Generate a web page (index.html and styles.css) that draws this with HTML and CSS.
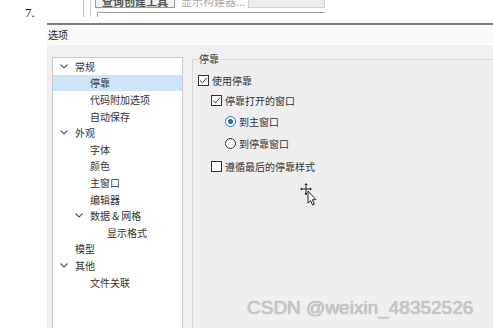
FILE: index.html
```html
<!doctype html>
<html lang="zh-CN">
<head>
	<meta charset="UTF-8">
	<title>选项</title>
	<link rel="stylesheet" href="styles.css">
</head>
<body>
	<div class="top">
		<span class="num">7.</span>
		<div class="frag">
			<div class="frag-in">
				<div class="tabs">
					<span class="tab tab-on">查询创建工具</span>
					<span class="tab tab-off">显示构建器...</span>
					<span class="tab tab-blank"></span>
				</div>
				<div class="edit"></div>
			</div>
		</div>
	</div>
	<div class="win">
		<div class="title">选项</div>
		<div class="main">
			<ul class="tree">
				<li class="node l0"><span class="tw"><svg width="8" height="5" viewBox="0 0 8 5"><path d="M0.5 0.5 L4 4 L7.5 0.5" fill="none" stroke="#555" stroke-width="1.1"/></svg></span>常规</li>
				<li class="node l1 on"><span class="tw"></span>停靠</li>
				<li class="node l1"><span class="tw"></span>代码附加选项</li>
				<li class="node l1"><span class="tw"></span>自动保存</li>
				<li class="node l0"><span class="tw"><svg width="8" height="5" viewBox="0 0 8 5"><path d="M0.5 0.5 L4 4 L7.5 0.5" fill="none" stroke="#555" stroke-width="1.1"/></svg></span>外观</li>
				<li class="node l1"><span class="tw"></span>字体</li>
				<li class="node l1"><span class="tw"></span>颜色</li>
				<li class="node l1"><span class="tw"></span>主窗口</li>
				<li class="node l1"><span class="tw"></span>编辑器</li>
				<li class="node l1"><span class="tw"><svg width="8" height="5" viewBox="0 0 8 5"><path d="M0.5 0.5 L4 4 L7.5 0.5" fill="none" stroke="#555" stroke-width="1.1"/></svg></span>数据 &amp; 网格</li>
				<li class="node l2"><span class="tw"></span>显示格式</li>
				<li class="node l0"><span class="tw"></span>模型</li>
				<li class="node l0"><span class="tw"><svg width="8" height="5" viewBox="0 0 8 5"><path d="M0.5 0.5 L4 4 L7.5 0.5" fill="none" stroke="#555" stroke-width="1.1"/></svg></span>其他</li>
				<li class="node l1"><span class="tw"></span>文件关联</li>
			</ul>
			<fieldset class="group">
				<legend>停靠</legend>
				<div class="opt r1">
					<span class="box"><svg width="9" height="9" viewBox="0 0 9 9"><path d="M1.2 4.6 L3.5 6.9 L7.8 1.8" fill="none" stroke="#333" stroke-width="1"/></svg></span>使用停靠
				</div>
				<div class="opt r2 in1">
					<span class="box"><svg width="9" height="9" viewBox="0 0 9 9"><path d="M1.2 4.6 L3.5 6.9 L7.8 1.8" fill="none" stroke="#333" stroke-width="1"/></svg></span>停靠打开的窗口
				</div>
				<div class="opt r3 in2">
					<span class="radio on"></span>到主窗口
				</div>
				<div class="opt r4 in2">
					<span class="radio"></span>到停靠窗口
				</div>
				<div class="opt r5 in1">
					<span class="box"></span>遵循最后的停靠样式
				</div>
			</fieldset>
		</div>
	</div>
	<svg class="cursor" width="20" height="24" viewBox="0 0 20 24">
		<path d="M6 1 L6 12 M1 6 L11 6" stroke="#222" stroke-width="1"/>
		<path d="M6 0 L4.5 2 L7.5 2 Z M6 12 L4.5 10 L7.5 10 Z M0 6 L2 4.5 L2 7.5 Z M12 6 L10 4.5 L10 7.5 Z" fill="#222"/>
		<path d="M8 8 L8 20 L10.6 17.5 L12.6 22 L14.4 21.2 L12.4 16.8 L16 16.6 Z" fill="#fff" stroke="#222" stroke-width="1"/>
	</svg>
	<div class="mark">CSDN @weixin_48352526</div>
</body>
</html>
```

FILE: styles.css
```css
*{
	margin: 0;
	padding: 0;
	box-sizing: border-box;
}
ul,li{
	list-style: none;
}
html{
	height: 328px;
	overflow: hidden;
}
body{
	width: 493px;
	height: 328px;
	overflow: hidden;
	display: flex;
	flex-direction: column;
	background: #fff;
	font-family: "Noto Sans CJK SC", "Liberation Sans", sans-serif;
	font-size: 10px;
	color: #333;
	position: relative;
}
.top{
	height: 23px;
	flex: none;
	display: flex;
}
.num{
	width: 83px;
	padding: 5px 0 0 25px;
	font-family: "Liberation Serif", serif;
	font-size: 13px;
	color: #222;
}
.frag{
	height: 17px;
	border-left: 1px solid #b8b8b8;
	padding-left: 6px;
}
.frag-in{
	height: 100%;
	border-left: 1px solid #cfcfcf;
	padding-left: 4px;
	width: 238px;
}
.tabs{
	display: flex;
	height: 8px;
	overflow: hidden;
}
.tab{
	display: block;
	height: 8px;
	line-height: 2px;
	font-size: 11px;
	padding-left: 6px;
	overflow: hidden;
	white-space: nowrap;
}
.tab-on{
	width: 80px;
	border: 1px solid #9a9a9a;
	border-top: none;
	font-weight: bold;
	color: #555;
	background: #f4f4f4;
}
.tab-off{
	width: 73px;
	color: #aaa;
}
.tab-blank{
	width: 77px;
	background: #ececec;
	border: 1px solid #d0d0d0;
	border-top: none;
}
.edit{
	margin: 4px 0 0 2px;
	width: 228px;
	height: 5px;
	border-top: 1px solid #a0a0a0;
	border-left: 1px solid #a0a0a0;
}
.win{
	flex: 1;
	min-height: 0;
	display: flex;
	flex-direction: column;
	margin-left: 47px;
	border-top: 2px solid #7d7d7d;
}
.title{
	height: 20px;
	flex: none;
	line-height: 20px;
	padding-left: 1px;
	background: #fafafa;
	font-size: 10px;
	color: #222;
}
.main{
	flex: 1;
	min-height: 0;
	display: flex;
	align-items: stretch;
	background: #f0f0f0;
	padding-top: 12px;
}
.tree{
	width: 131px;
	margin-left: 5px;
	border: 1px solid #c9c9c9;
	border-bottom: none;
	background: #fff;
}
.node{
	height: 16.6px;
	display: flex;
	align-items: center;
	color: #333;
	white-space: nowrap;
}
.node.on{
	background: #cde6f7;
}
.tw{
	width: 10px;
	margin-right: 6px;
	display: flex;
	justify-content: center;
}
.l0{
	padding-left: 6px;
}
.l1{
	padding-left: 21px;
}
.l2{
	padding-left: 38px;
}
.group{
	flex: 1;
	min-width: 0;
	margin: -5px 0 0 9px;
	border: 1px solid #d8d8d8;
	border-right: none;
	border-bottom: none;
	padding: 0 0 0 5px;
	background: #efeff0;
}
.group legend{
	padding: 0 1px;
	line-height: 14px;
	color: #333;
}
.opt{
	display: flex;
	align-items: center;
	height: 20px;
	white-space: nowrap;
}
.r1{
	margin-top: 4px;
}
.r3{
	margin-top: 1px;
	height: 21px;
}
.r4{
	height: 22px;
}
.r5{
	margin-top: 1px;
	height: 23px;
}
.in1{
	padding-left: 13px;
}
.in2{
	padding-left: 27px;
}
.box{
	width: 11px;
	height: 11px;
	border: 1px solid #333;
	background: #fff;
	margin-right: 3px;
	display: flex;
	align-items: center;
	justify-content: center;
}
.radio{
	width: 11px;
	height: 11px;
	border: 1px solid #333;
	border-radius: 50%;
	background: #fff;
	margin-right: 3px;
	display: flex;
	align-items: center;
	justify-content: center;
}
.radio.on{
	border-color: #1a73c8;
}
.radio.on::after{
	content: "";
	width: 5px;
	height: 5px;
	border-radius: 50%;
	background: #1a6fc4;
}
.cursor{
	position: absolute;
	left: 300px;
	top: 183px;
}
.mark{
	position: absolute;
	left: 247px;
	top: 297px;
	font-family: "Liberation Sans", sans-serif;
	font-size: 19px;
	color: #c8c8c8;
	text-shadow: 0 0 1px #999;
	white-space: nowrap;
}
```
